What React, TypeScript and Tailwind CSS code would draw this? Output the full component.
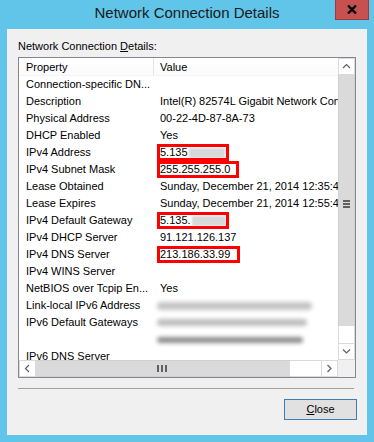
import type { ReactNode } from "react";

type Row = {
  prop: string;
  value: ReactNode;
};

function Blur({ w, tone, h }: { w: number; tone: string; h: number }) {
  return (
    <span
      className={`ml-[-3px] inline-block ${tone} blur-[2px] align-middle rounded-full`}
      style={{ width: w, height: h }}
    />
  );
}

function Boxed({ w, children }: { w: number; children: ReactNode }) {
  return (
    <span
      className="ml-[-3px] flex h-[17px] items-center border-[3px] border-[#ff0000] overflow-hidden"
      style={{ width: w }}
    >
      {children}
    </span>
  );
}

const rows: Row[] = [
  { prop: "Connection-specific DN...", value: "" },
  { prop: "Description", value: "Intel(R) 82574L Gigabit Network Connection" },
  { prop: "Physical Address", value: "00-22-4D-87-8A-73" },
  { prop: "DHCP Enabled", value: "Yes" },
  {
    prop: "IPv4 Address",
    value: (
      <Boxed w={72}>
        <span>5.135</span>
        <span className="ml-[1px] inline-block h-[10px] w-[36px] bg-[#d8d8d8] blur-[1px]" />
      </Boxed>
    ),
  },
  {
    prop: "IPv4 Subnet Mask",
    value: (
      <Boxed w={82}>
        <span>255.255.255.0</span>
      </Boxed>
    ),
  },
  { prop: "Lease Obtained", value: "Sunday, December 21, 2014 12:35:48 PM" },
  { prop: "Lease Expires", value: "Sunday, December 21, 2014 12:55:49 PM" },
  {
    prop: "IPv4 Default Gateway",
    value: (
      <Boxed w={72}>
        <span>5.135.</span>
        <span className="ml-[1px] inline-block h-[10px] w-[34px] bg-[#d8d8d8] blur-[1px]" />
      </Boxed>
    ),
  },
  { prop: "IPv4 DHCP Server", value: "91.121.126.137" },
  {
    prop: "IPv4 DNS Server",
    value: (
      <Boxed w={83}>
        <span>213.186.33.99</span>
      </Boxed>
    ),
  },
  { prop: "IPv4 WINS Server", value: "" },
  { prop: "NetBIOS over Tcpip En...", value: "Yes" },
  { prop: "Link-local IPv6 Address", value: <Blur w={155} h={8} tone="bg-[#c4c4c4]" /> },
  { prop: "IPv6 Default Gateways", value: <Blur w={150} h={7} tone="bg-[#bdbdbd]" /> },
  { prop: "", value: <Blur w={146} h={6} tone="bg-[#8c8c8c]" /> },
  { prop: "IPv6 DNS Server", value: "" },
];

function Chevron({ dir }: { dir: "up" | "down" | "left" | "right" }) {
  const d = {
    up: "M1 5 L4.5 1.5 L8 5",
    down: "M1 1.5 L4.5 5 L8 1.5",
    left: "M5 1 L1.5 4.5 L5 8",
    right: "M1.5 1 L5 4.5 L1.5 8",
  }[dir];
  const vertical = dir === "up" || dir === "down";
  return (
    <svg
      width={vertical ? 9 : 7}
      height={vertical ? 7 : 9}
      viewBox={vertical ? "0 0 9 7" : "0 0 7 9"}
      fill="none"
      stroke="#606060"
      strokeWidth="1.2"
    >
      <path d={d} />
    </svg>
  );
}

export default function App() {
  return (
    <div className="w-[374px] h-[442px] bg-[#60c5e9] flex flex-col font-['Liberation_Sans',Arial,sans-serif] text-[11px] text-black overflow-hidden">
      {/* title bar */}
      <div className="relative h-[29px] shrink-0">
        <div className="pt-[3px] text-center text-[15px] leading-[19px] text-[#1a1a1a]">
          Network Connection Details
        </div>
        <div className="absolute top-0 right-[5px] w-[34px] h-[20px] bg-[#c75050] border-x border-b border-[#9a3b3b] flex items-center justify-center">
          <svg width="10" height="9" viewBox="0 0 10 9" stroke="#000" strokeWidth="2.4">
            <path d="M1 0.5 L9 8.5 M9 0.5 L1 8.5" />
          </svg>
        </div>
      </div>

      {/* client area */}
      <div className="mx-[7px] mb-[7px] flex-1 bg-[#f0f0f0] flex flex-col">
        <div className="ml-[11px] mt-[10px] h-[15px] leading-[15px] text-[11px]">
          Network Connection <span className="underline">D</span>etails:
        </div>

        <div className="ml-[11px] mt-[3px] w-[338px] h-[321px] border border-[#828790] bg-white flex">
          {/* main column */}
          <div className="w-[319px] flex flex-col">
            <div className="w-[319px] h-[302px] overflow-hidden">
              <div className="flex h-[18px] bg-gradient-to-b from-white to-[#fbfbfb] border-b border-[#f4f4f4]">
                <div className="w-[135px] pl-[7px] leading-[18px] border-r border-[#e5e5e5]">Property</div>
                <div className="pl-[6px] leading-[18px]">Value</div>
              </div>
              <div className="h-[284px] overflow-hidden">
                {rows.map((r, i) => (
                  <div key={i} className="flex h-[17px] items-center whitespace-nowrap">
                    <div className="w-[135px] shrink-0 pl-[7px] leading-[17px] overflow-hidden">{r.prop}</div>
                    <div className="pl-[6px] flex items-center leading-[17px] h-[17px]">{r.value}</div>
                  </div>
                ))}
              </div>
            </div>

            {/* horizontal scrollbar */}
            <div className="h-[17px] flex">
              <div className="w-[17px] h-[17px] bg-white border border-[#dadada] flex items-center justify-center">
                <Chevron dir="left" />
              </div>
              <div className="w-[254px] h-[17px] bg-[#dadada] border-y border-[#d0d0d0] flex items-center justify-center">
                <div className="flex gap-[2px] ml-[-2px]">
                  <span className="w-[2px] h-[7px] bg-[#606060]" />
                  <span className="w-[2px] h-[7px] bg-[#606060]" />
                  <span className="w-[2px] h-[7px] bg-[#606060]" />
                </div>
              </div>
              <div className="w-[31px] h-[17px] bg-white border-y border-[#dadada]" />
              <div className="w-[17px] h-[17px] bg-white border border-[#dadada] flex items-center justify-center">
                <Chevron dir="right" />
              </div>
            </div>
          </div>

          {/* vertical scrollbar */}
          <div className="w-[17px] flex flex-col">
            <div className="h-[17px] bg-white border border-[#dadada] flex items-center justify-center">
              <Chevron dir="up" />
            </div>
            <div className="h-[251px] bg-[#dadada] border-x border-[#d0d0d0] flex items-center justify-center">
              <div className="flex flex-col gap-[1px] mt-[6px]">
                <span className="w-[7px] h-[2px] bg-[#606060]" />
                <span className="w-[7px] h-[2px] bg-[#606060]" />
                <span className="w-[7px] h-[2px] bg-[#606060]" />
              </div>
            </div>
            <div className="h-[17px] bg-white border-x border-[#dadada]" />
            <div className="h-[17px] bg-white border border-[#dadada] flex items-center justify-center">
              <Chevron dir="down" />
            </div>
            <div className="h-[17px] bg-[#f0f0f0]" />
          </div>
        </div>

        <div className="ml-[11px] mt-[10px] w-[336px] h-[1px] bg-[#a0a0a0]" />

        <div className="mt-[10px] mr-[10px] flex justify-end">
          <button className="w-[73px] h-[21px] bg-[#e1e1e1] border border-[#3c7fb1] text-[11px] leading-[19px] text-black">
            <span className="underline">C</span>lose
          </button>
        </div>
      </div>
    </div>
  );
}
